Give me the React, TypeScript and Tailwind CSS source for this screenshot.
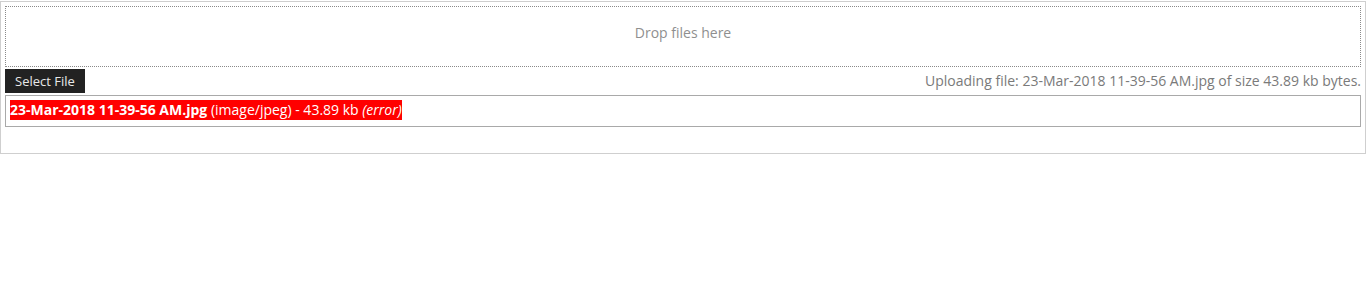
export default function App() {
  return (
    <div className="mt-px border border-[#cfcfcf] px-1 pt-1 pb-[26px] font-['Open_Sans',sans-serif]">
      {/* drop zone */}
      <div className="h-[61px] border border-dotted border-[#8a8a8a] pt-4 text-center text-sm leading-5 text-[#8f8f8f]">
        Drop files here
      </div>

      <div className="mt-[2px] flex h-6 items-center justify-between">
        <button className="h-6 bg-[#222222] px-[10px] text-[13px] leading-6 text-[#e8e8e8]">
          Select File
        </button>
        <span className="text-sm leading-5 text-[#7a7a7a]">
          Uploading file: 23-Mar-2018 11-39-56 AM.jpg of size 43.89 kb bytes.
        </span>
      </div>

      {/* file list */}
      <div className="mt-[2px] h-8 border border-[#a9a9a9] p-1 text-sm leading-5">
        <span className="inline-block bg-[#ff0000] align-top text-white">
          <b className="font-bold">23-Mar-2018 11-39-56 AM.jpg</b> (image/jpeg) - 43.89 kb <i>(error)</i>
        </span>
      </div>
    </div>
  );
}
